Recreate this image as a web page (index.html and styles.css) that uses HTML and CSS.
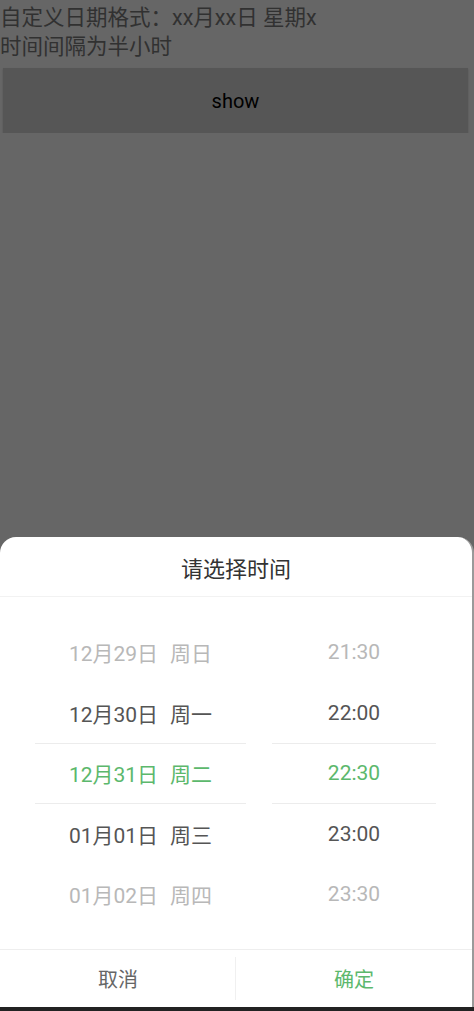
FILE: index.html
```html
<!DOCTYPE html>
<html lang="zh-CN">
  <head>
    <meta charset="UTF-8" />
    <title>时间选择</title>
    <link rel="stylesheet" href="styles.css">
  </head>
  <body>
    <div class="pagina">
      <div class="descricao">自定义日期格式：xx月xx日 星期x</div>
      <div class="descricao">时间间隔为半小时</div>
      <div class="show-btn">show</div>
    </div>

    <div class="mascara"></div>

    <div class="folha">
      <div class="cabecalho">请选择时间</div>

      <div class="seletor">
        <div class="coluna">
          <div class="item longe">12月29日<span class="semana">周日</span></div>
          <div class="item perto">12月30日<span class="semana">周一</span></div>
          <div class="item atual">12月31日<span class="semana">周二</span></div>
          <div class="item perto">01月01日<span class="semana">周三</span></div>
          <div class="item longe">01月02日<span class="semana">周四</span></div>
        </div>
        <div class="coluna">
          <div class="item longe">21:30</div>
          <div class="item perto">22:00</div>
          <div class="item atual">22:30</div>
          <div class="item perto">23:00</div>
          <div class="item longe">23:30</div>
        </div>
      </div>

      <div class="rodape">
        <div class="botao cancelar">取消</div>
        <div class="botao confirmar">确定</div>
      </div>
    </div>

    <div class="barra"></div>
  </body>
</html>
```

FILE: styles.css
```css
body {
  margin: 0;
  font-family: Roboto, "Noto Sans CJK SC", sans-serif;
  background: #fff;
}
.pagina {
  padding-top: 3px;
}
.descricao {
  font-size: 21.5px;
  line-height: 29px;
  color: #7c7c7c;
}
.show-btn {
  margin: 7px 6px 0 3px;
  height: 65px;
  background: #d6d6d6;
  display: flex;
  align-items: center;
  justify-content: center;
  font-size: 20px;
  color: #000;
  box-shadow: 0 1px 2px rgba(0, 0, 0, 0.2);
}
.mascara {
  position: fixed;
  inset: 0;
  background: rgba(0, 0, 0, 0.6);
}
.folha {
  position: fixed;
  left: 0;
  right: 0;
  bottom: 4px;
  background: #fff;
  border-radius: 16px 16px 0 0;
  border-right: 2px solid #9a9a9a;
}
.cabecalho {
  height: 59px;
  display: flex;
  align-items: center;
  justify-content: center;
  font-size: 22px;
  color: #333;
  border-bottom: 1px solid #f2f2f2;
}
.seletor {
  display: grid;
  grid-template-columns: 211px 164px;
  column-gap: 26px;
  padding: 25px 36px 24.5px 35px;
}
.item {
  box-sizing: border-box;
  height: 60.5px;
  display: flex;
  align-items: center;
  justify-content: center;
  font-size: 21px;
  white-space: nowrap;
}
.semana {
  margin-left: 12px;
}
.longe {
  color: #b8b8b8;
}
.perto {
  color: #555;
}
.atual {
  color: #5cb86c;
  border-top: 1px solid #ececec;
  border-bottom: 1px solid #ececec;
}
.rodape {
  display: flex;
  border-top: 1px solid #eee;
}
.botao {
  flex: 1;
  height: 57px;
  display: flex;
  align-items: center;
  justify-content: center;
  font-size: 20px;
}
.cancelar {
  color: #666;
  position: relative;
}
.cancelar::after {
  content: "";
  position: absolute;
  right: 0;
  top: 7px;
  bottom: 7px;
  width: 1px;
  background: #f0f0f0;
}
.confirmar {
  color: #5cb86c;
}
.barra {
  position: fixed;
  left: 0;
  right: 0;
  bottom: 0;
  height: 4px;
  background: #222;
}
```
